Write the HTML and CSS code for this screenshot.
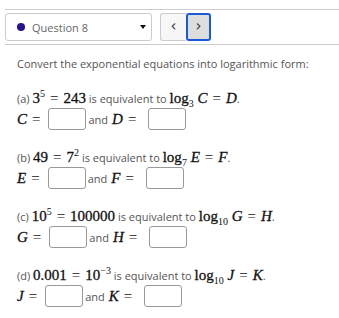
FILE: index.html
```html
<!DOCTYPE html>
<html lang="en">
<head>
    <meta charset="UTF-8">
    <title>Question 8</title>
    <link rel="stylesheet" href="styles.css">
</head>
<body>

<div id="wrap">
    <div class="nav">
        <div class="picker">
            <span class="dot"></span>
            <span class="picker-label">Question 8</span>
            <span class="caret"></span>
        </div>
        <div class="pager">
            <button class="pg prev">&lsaquo;</button>
            <button class="pg next">&rsaquo;</button>
        </div>
    </div>

    <div class="body">
        <p class="intro">Convert the exponential equations into logarithmic form:</p>

        <div class="part">
            <p class="q">(a) <span class="m">3<sup>5</sup><span class="eq">=</span>243</span> is equivalent to <span class="m">log<sub>3</sub> <i>C</i><span class="eq">=</span><i>D</i></span>.</p>
            <div class="row">
                <span class="m"><i>C</i><span class="eq">=</span></span><span class="box"></span><span class="and">and</span><span class="m"><i>D</i><span class="eq">=</span></span><span class="box"></span>
            </div>
        </div>

        <div class="part">
            <p class="q">(b) <span class="m">49<span class="eq">=</span>7<sup>2</sup></span> is equivalent to <span class="m">log<sub>7</sub> <i>E</i><span class="eq">=</span><i>F</i></span>.</p>
            <div class="row">
                <span class="m"><i>E</i><span class="eq">=</span></span><span class="box"></span><span class="and">and</span><span class="m"><i>F</i><span class="eq">=</span></span><span class="box"></span>
            </div>
        </div>

        <div class="part">
            <p class="q">(c) <span class="m">10<sup>5</sup><span class="eq">=</span>100000</span> is equivalent to <span class="m">log<sub>10</sub> <i>G</i><span class="eq">=</span><i>H</i></span>.</p>
            <div class="row">
                <span class="m"><i>G</i><span class="eq">=</span></span><span class="box"></span><span class="and">and</span><span class="m"><i>H</i><span class="eq">=</span></span><span class="box"></span>
            </div>
        </div>

        <div class="part">
            <p class="q">(d) <span class="m">0.001<span class="eq">=</span>10<sup>&minus;3</sup></span> is equivalent to <span class="m">log<sub>10</sub> <i>J</i><span class="eq">=</span><i>K</i></span>.</p>
            <div class="row">
                <span class="m"><i>J</i><span class="eq">=</span></span><span class="box"></span><span class="and">and</span><span class="m"><i>K</i><span class="eq">=</span></span><span class="box"></span>
            </div>
        </div>

        <div class="more"></div>
    </div>
</div>

</body>
</html>
```

FILE: styles.css
```css
body, html {
    margin:0;
    padding:0;
    background:#fff;
    color:#555;
    font-family:"Open Sans", "Liberation Sans", sans-serif;
    font-size:11px;
}
#wrap {
    padding-top:9px;
    padding-left:5px;
}
.nav {
    display:flex;
    align-items:center;
    gap:8px;
    padding:3px 0;
    border-top:1px solid #ccc;
    border-bottom:1px solid #ccc;
}
.picker {
    display:flex;
    align-items:center;
    box-sizing:border-box;
    width:147px;
    height:28px;
    padding:0 5px 0 11px;
    border:1px solid #ccc;
    border-radius:3px;
}
.dot {
    width:8px;
    height:8px;
    border-radius:50%;
    background:#27128f;
}
.picker-label {
    flex:1;
    margin-left:7px;
    color:#666;
}
.caret {
    width:0;
    height:0;
    border-left:3px solid transparent;
    border-right:3px solid transparent;
    border-top:4px solid #111;
}
.pager {
    display:flex;
}
.pg {
    box-sizing:border-box;
    height:28px;
    margin:0;
    padding:0 0 2px;
    font-family:"DejaVu Sans", sans-serif;
    font-size:15px;
    color:#333;
    cursor:pointer;
}
.prev {
    width:26px;
    background:#f7f7f7;
    border:1px solid #ccc;
    border-right:none;
    border-radius:3px 0 0 3px;
}
.next {
    width:25px;
    background:#ddd;
    border:2px solid #1a5ad8;
    border-radius:3px;
}
.body {
    padding:11px 0 0 12px;
}
.intro {
    margin:0 0 18px;
    line-height:16px;
}
.part {
    margin-bottom:19px;
}
.q {
    margin:0;
    line-height:16px;
    white-space:nowrap;
}
.m {
    font-family:"Liberation Serif", "DejaVu Serif", serif;
    font-size:15px;
    color:#111;
    -webkit-text-stroke:0.3px #111;
}
.m i {
    font-style:italic;
}
.m sup, .m sub {
    font-size:10px;
    line-height:0;
    -webkit-text-stroke:0;
}
.eq {
    margin:0 5px;
    -webkit-text-stroke:0;
}
.row {
    display:flex;
    align-items:center;
    margin-top:1px;
    height:22px;
}
.row .m {
    margin-right:3px;
}
.box {
    box-sizing:border-box;
    width:38px;
    height:22px;
    border:1px solid #999;
    border-radius:3px;
    background:#fff;
}
.and {
    margin:0 4px 0 2px;
}
.row .and + .m .eq {
    margin-right:9px;
}
.more {
    width:10px;
    margin-left:83px;
    border-top:2px solid #666;
}
```
